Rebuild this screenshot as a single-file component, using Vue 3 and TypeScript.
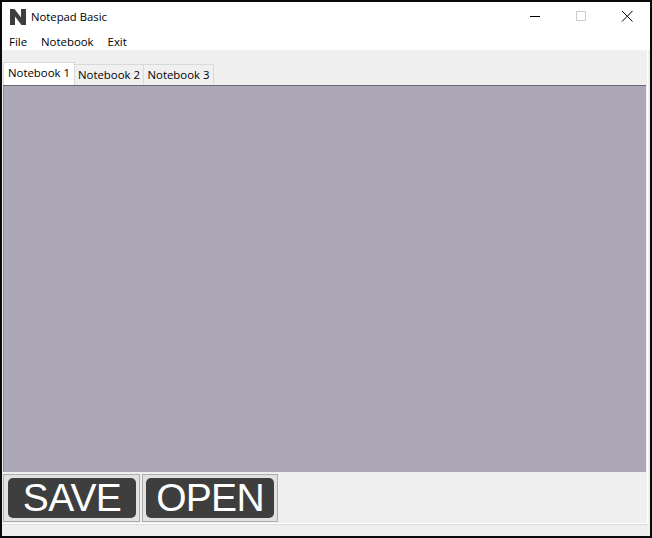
<script setup lang="ts">
const menus: string[] = ['File', 'Notebook', 'Exit']
const tabs: string[] = ['Notebook 1', 'Notebook 2', 'Notebook 3']
const actions: string[] = ['SAVE', 'OPEN']
</script>

<template>
  <div class="screen">
    <div class="window">
      <header class="titlebar">
        <svg class="logo" width="16" height="16" viewBox="0 0 16 16">
          <path d="M0 16V0h4.500l6.500 8.500V0h5v16h-4.500L5 7.500V16z" fill="#3d3d3d" />
        </svg>
        <span class="title">Notepad Basic</span>
        <div class="controls">
          <svg width="46" height="16" viewBox="0 0 46 16"><path d="M18 7.500h10" stroke="#000" fill="none" /></svg>
          <svg width="46" height="16" viewBox="0 0 46 16"><path d="M18.500 2.500h9v9h-9z" stroke="#ccc" fill="none" /></svg>
          <svg width="46" height="16" viewBox="0 0 46 16"><path d="M18 2l10.500 10.500M28.500 2L18 12.500" stroke="#000" fill="none" /></svg>
        </div>
      </header>
      <nav class="menubar">
        <span v-for="m in menus" :key="m" class="menu">{{ m }}</span>
      </nav>
      <main class="content">
        <div class="panel">
          <div class="tabs">
            <div v-for="(t, i) in tabs" :key="t" class="tab" :class="{ active: i === 0 }">{{ t }}</div>
          </div>
          <div class="pane"></div>
          <div class="actions">
            <div v-for="a in actions" :key="a" class="frame">
              <button class="action">{{ a }}</button>
            </div>
          </div>
        </div>
      </main>
    </div>
  </div>
</template>

<style>
html, body { margin: 0; padding: 0; background: #000; }
</style>

<style scoped>
.screen {
  width: 652px;
  height: 538px;
  box-sizing: border-box;
  padding: 2px;
  background: #0a0a0c;
  font-family: "Open Sans", "Noto Sans", sans-serif;
  overflow: hidden;
}
.window {
  height: 534px;
  display: flex;
  flex-direction: column;
  background: #f0f0f0;
}
.titlebar {
  height: 30px;
  display: flex;
  align-items: center;
  background: #fff;
  color: #000;
  padding-left: 8px;
  flex: none;
}
.logo { margin-right: 5px; }
.title { font-size: 11.300px; line-height: 16px; color: #000; }
.controls { margin-left: auto; display: flex; }
.controls svg { display: block; }
.menubar {
  height: 18px;
  display: flex;
  gap: 14px;
  padding: 1px 0 0 7px;
  box-sizing: border-box;
  background: #fff;
  font-size: 11.400px;
  line-height: 18px;
  color: #000;
  flex: none;
}
.content {
  flex: 1;
  display: flex;
  flex-direction: column;
  background: #efefef;
  min-height: 0;
  padding-bottom: 12px;
}
.panel {
  flex: 1;
  display: flex;
  flex-direction: column;
  box-sizing: border-box;
  margin-right: 2px;
  padding: 12px 1px 0 1px;
  border-right: 1px solid #fff;
  border-bottom: 1px solid #fff;
  box-shadow: 0 1px 0 #dcdcdc;
}
.tabs {
  height: 23px;
  display: flex;
  align-items: flex-end;
  flex: none;
}
.tab {
  width: 70px;
  height: 21px;
  box-sizing: border-box;
  border: 1px solid #d9d9d9;
  border-bottom: none;
  margin-left: -1px;
  font-size: 11.400px;
  line-height: 20px;
  text-align: center;
  color: #000;
  background: #f0f0f0;
}
.tab.active {
  width: 72px;
  height: 23px;
  background: #fff;
  margin-left: 0;
  position: relative;
  z-index: 1;
}
.tab:last-child { width: 71px; }
.pane {
  height: 387px;
  width: 643px;
  box-sizing: border-box;
  flex: none;
  background: #aca8b7;
  border-top: 1px solid #6b6774;
  border-left: 1px solid #8f8c99;
}
.actions {
  display: flex;
  gap: 2px;
  padding-top: 2px;
  flex: none;
}
.frame {
  width: 136px;
  height: 48px;
  box-sizing: border-box;
  border: 1px solid #adadad;
  background: #e1e1e1;
  padding: 3px;
  display: flex;
}
.frame:first-child { width: 137px; padding-left: 4px; }
.action {
  flex: 1;
  margin: 0;
  border: none;
  padding: 0;
  background: #3e3e3e;
  border-radius: 5px;
  color: #fff;
  font-family: "Liberation Sans", Arial, sans-serif;
  font-size: 39px;
  line-height: 40px;
  letter-spacing: -0.700px;
}
</style>
